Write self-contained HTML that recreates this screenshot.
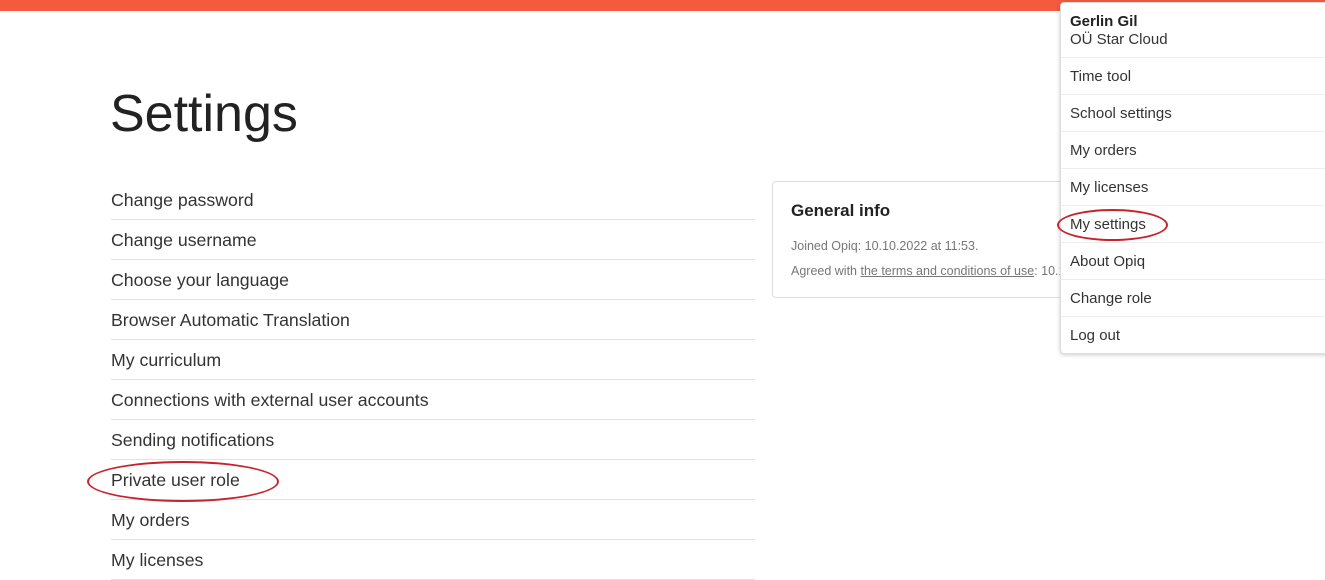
<!DOCTYPE html>
<html><head><style>
body{margin:0;width:1325px;height:571px;overflow:hidden;background:#fff;font-family:"Liberation Sans",sans-serif;position:relative;color:#222}
.bar{position:absolute;left:0;top:0;width:1325px;height:11px;background:#f55a3f}
h1{position:absolute;left:110px;top:84px;margin:0;font-weight:400;font-size:52px;color:#222}
.list{position:absolute;left:111px;top:180px;width:644px}
.list div{height:39px;border-bottom:1px solid #e2e2e2;font-size:17.7px;line-height:40px;color:#333}
.card{position:absolute;left:772px;top:181px;width:320px;height:115px;border:1px solid #ddd;border-radius:4px}
.card b{position:absolute;left:18px;top:19px;font-size:17px;color:#222}
.card p{position:absolute;left:18px;margin:0;font-size:12.5px;color:#777;white-space:nowrap}
.menu{position:absolute;left:1060px;top:2px;width:270px;height:350px;background:#fff;border:1px solid #ddd;border-radius:4px;box-shadow:0 1px 4px rgba(0,0,0,.2)}
.menu div{height:36px;border-bottom:1px solid #eee;font-size:15px;line-height:38px;padding-left:9px;color:#333}
.menu .h{height:54px;line-height:18px;padding-top:0}
.ell{position:absolute;border:2.5px solid #c8232c;border-radius:50%}
</style></head><body>
<div class="bar"></div>
<h1>Settings</h1>
<div class="list">
<div>Change password</div><div>Change username</div><div>Choose your language</div><div>Browser Automatic Translation</div><div>My curriculum</div><div>Connections with external user accounts</div><div>Sending notifications</div><div>Private user role</div><div>My orders</div><div>My licenses</div>
</div>
<div class="card"><b>General info</b>
<p style="top:57px">Joined Opiq: 10.10.2022 at 11:53.</p>
<p style="top:82px">Agreed with <u>the terms and conditions of use</u>: 10.10.2022</p></div>
<div class="menu">
<div class="h"><span style="display:block;padding-top:10px;font-weight:bold;color:#222">Gerlin Gil</span><span style="display:block">OÜ Star Cloud</span></div>
<div>Time tool</div><div>School settings</div><div>My orders</div><div>My licenses</div><div>My settings</div><div>About Opiq</div><div>Change role</div><div style="border:0">Log out</div>
</div>
<div class="ell" style="left:87px;top:461px;width:188px;height:37px"></div>
<div class="ell" style="left:1057px;top:209px;width:107px;height:28px"></div>
</body></html>
